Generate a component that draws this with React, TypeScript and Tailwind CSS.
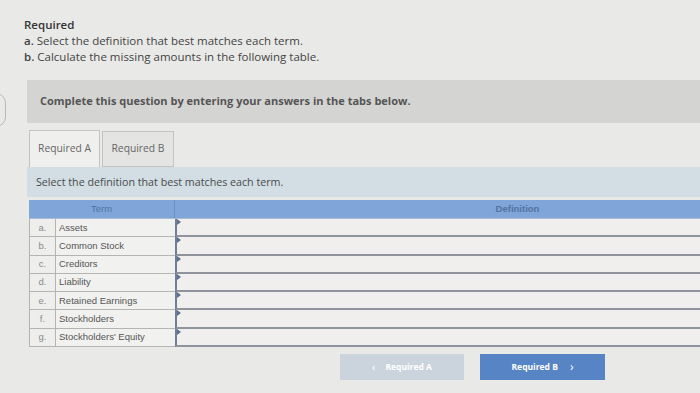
import React from "react";

const terms = [
  { k: "a.", t: "Assets" },
  { k: "b.", t: "Common Stock" },
  { k: "c.", t: "Creditors" },
  { k: "d.", t: "Liability" },
  { k: "e.", t: "Retained Earnings" },
  { k: "f.", t: "Stockholders" },
  { k: "g.", t: "Stockholders' Equity" },
];

export default function App() {
  return (
    <div className="w-[700px] h-[393px] overflow-hidden bg-[#e9e9e7] text-[#3f3f3f] relative font-['Open_Sans',sans-serif]">
      {/* left edge bracket (partial control from photo) */}
      <div className="absolute -left-[14px] top-[93px] w-[20px] h-[34px] rounded-full border border-[#b9b9b7]" />

      {/* Instructions */}
      <div className="pl-[24px] pt-[17px] text-[11.5px] leading-[16px] text-[#444]">
        <div className="font-semibold text-[#333]">Required</div>
        <div>
          <span className="font-semibold">a.</span> Select the definition that best matches each term.
        </div>
        <div>
          <span className="font-semibold">b.</span> Calculate the missing amounts in the following table.
        </div>
      </div>

      {/* Gray banner */}
      <div className="ml-[27px] mt-[15px] h-[43px] bg-[#d4d4d2] flex items-center pl-[13px]">
        <span className="text-[11px] font-bold text-[#555]">
          Complete this question by entering your answers in the tabs below.
        </span>
      </div>

      {/* Tabs */}
      <div className="ml-[29px] mt-[7px] flex gap-[2px] items-end h-[37px]">
        <div className="w-[71px] h-[37px] bg-[#efefed] border border-b-0 border-[#c3c3c1] flex items-center justify-center text-[10.3px] text-[#666]">
          Required A
        </div>
        <div className="w-[72px] h-[36px] bg-[#e4e4e2] border border-[#c3c3c1] flex items-center justify-center text-[10.3px] text-[#666]">
          Required B
        </div>
      </div>

      {/* Light blue banner */}
      <div className="ml-[27px] h-[30px] bg-[#d2dee4] flex items-center pl-[9px]">
        <span className="text-[10.7px] text-[#4a4a4a]">Select the definition that best matches each term.</span>
      </div>

      {/* Table (runs past the right edge of the view) */}
      <div className="ml-[29px] mt-[3px] w-[831px] font-['Liberation_Sans',sans-serif] text-[9.5px]">
        <div className="flex h-[19px] bg-[#7fa5d9] border-b border-[#a9bcd3]">
          <div className="w-[146px] flex items-center justify-center text-[#52739f] border-r border-[#6d8fbf]">Term</div>
          <div className="flex-1 flex items-center justify-center text-[#52739f] font-bold">Definition</div>
        </div>
        {terms.map((r) => (
          <div key={r.k} className="flex h-[18.3px]">
            <div className="w-[26px] bg-[#eeeeec] border-l border-b border-[#b4b4b2] flex items-center justify-center text-[#8a8a8a]">
              {r.k}
            </div>
            <div className="w-[120px] bg-[#f1f1ef] border-l border-b border-[#b4b4b2] flex items-center pl-[3px] text-[#555]">
              {r.t}
            </div>
            <div className="flex-1 relative bg-[#f0efed] border-l-2 border-[#6e7f99] border-b-2 border-b-[#8e939c]">
              <span className="absolute left-0 top-0 w-0 h-0 border-t-[3px] border-b-[3px] border-l-[4px] border-t-transparent border-b-transparent border-l-[#5c6f8f]" />
            </div>
          </div>
        ))}
      </div>

      {/* Nav buttons */}
      <div className="ml-[340px] mt-[7px] flex gap-[16px]">
        <div className="w-[124px] h-[26px] bg-[#cbd4dd] flex items-center justify-center gap-[10px] text-white text-[8.5px] font-bold">
          <span className="text-[11px] font-normal">&lsaquo;</span>
          <span>Required A</span>
        </div>
        <div className="w-[125px] h-[26px] bg-[#5684c4] flex items-center justify-center gap-[12px] text-white text-[8.5px] font-bold">
          <span>Required B</span>
          <span className="text-[12px] font-normal">&rsaquo;</span>
        </div>
      </div>
    </div>
  );
}
